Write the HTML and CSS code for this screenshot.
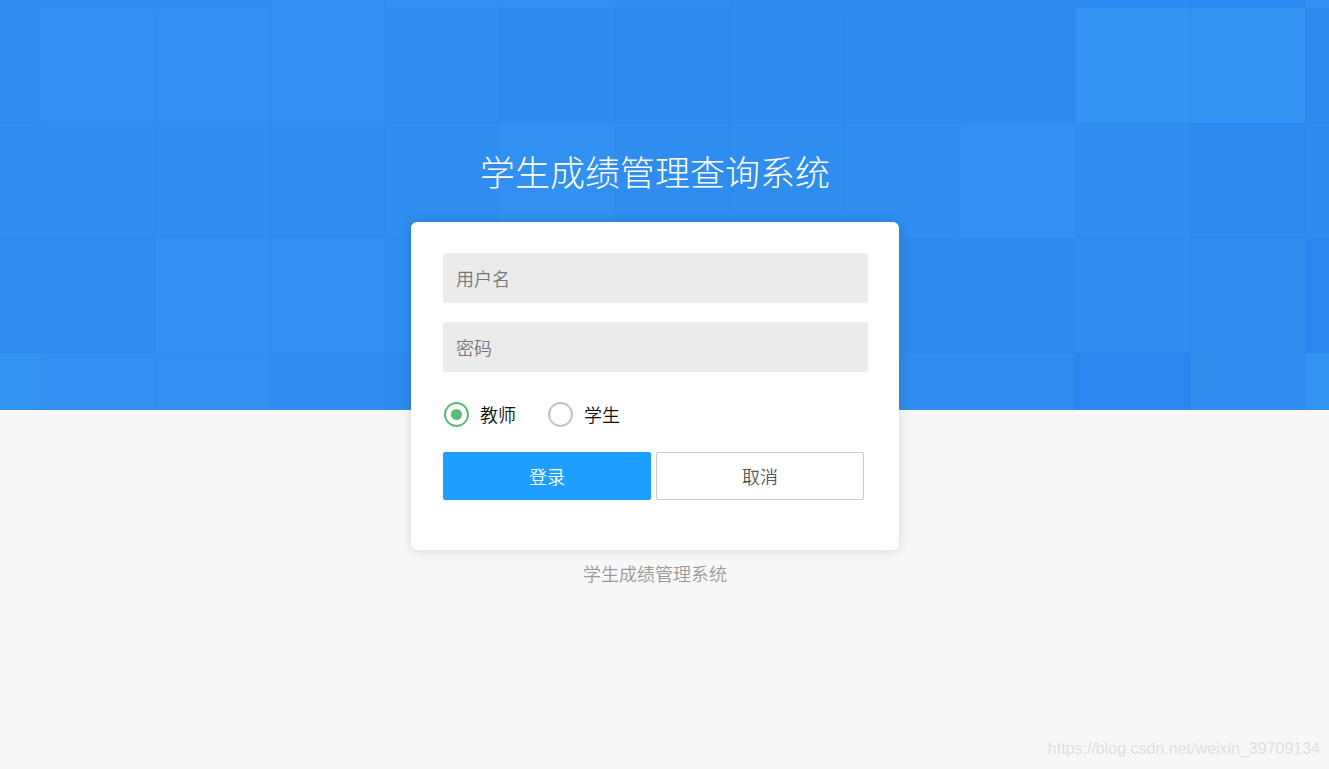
FILE: index.html
```html
<!DOCTYPE html>
<html lang="zh-CN">
<head>
<meta charset="utf-8">
<title>学生成绩管理查询系统</title>
<link rel="stylesheet" href="styles.css">
</head>
<body>
<div class="page">
  <div class="hero-bg" aria-hidden="true">
    <div class="tiles">
      <i class="s3"></i><i class="s3"></i><i class="s3"></i><i class="s4"></i><i class="s4"></i><i class="s4"></i><i class="s3"></i><i class="s2"></i><i class="s2"></i><i class="s2"></i><i class="s2"></i><i class="s2"></i><i class="s4"></i>
      <i class="s3"></i><i class="s4"></i><i class="s4"></i><i class="s4"></i><i class="s3"></i><i class="s2"></i><i class="s2"></i><i class="s2"></i><i class="s2"></i><i class="s2"></i><i class="s5"></i><i class="s5"></i><i class="s2"></i>
      <i class="s3"></i><i class="s3"></i><i class="s3"></i><i class="s3"></i><i class="s3"></i><i class="s4"></i><i class="s3"></i><i class="s3"></i><i class="s3"></i><i class="s4"></i><i class="s3"></i><i class="s2"></i><i class="s2"></i>
      <i class="s3"></i><i class="s3"></i><i class="s4"></i><i class="s4"></i><i class="s3"></i><i class="s3"></i><i class="s3"></i><i class="s3"></i><i class="s2"></i><i class="s2"></i><i class="s3"></i><i class="s3"></i><i class="s1"></i>
      <i class="s5"></i><i class="s4"></i><i class="s4"></i><i class="s3"></i><i class="s2"></i><i class="s3"></i><i class="s3"></i><i class="s3"></i><i class="s3"></i><i class="s3"></i><i class="s1"></i><i class="s3"></i><i class="s5"></i>
    </div>
  </div>

  <main class="login">
    <h1 class="title">学生成绩管理查询系统</h1>
    <form class="card">
      <input class="field" type="text" placeholder="用户名">
      <input class="field field-pass" type="password" placeholder="密码">
      <div class="roles">
        <label class="radio">
          <input type="radio" name="role" value="teacher" checked>
          <span class="circle"></span>
          <span class="radio-text">教师</span>
        </label>
        <label class="radio">
          <input type="radio" name="role" value="student">
          <span class="circle"></span>
          <span class="radio-text">学生</span>
        </label>
      </div>
      <div class="actions">
        <button type="button" class="btn btn-primary">登录</button>
        <button type="button" class="btn btn-plain">取消</button>
      </div>
    </form>
    <p class="footer">学生成绩管理系统</p>
  </main>

  <div class="watermark">https://blog.csdn.net/weixin_39709134</div>
</div>
</body>
</html>
```

FILE: styles.css
```css
* {
  box-sizing: border-box;
}

html, body {
  margin: 0;
  padding: 0;
}

body {
  background: #f8f8f8;
  font-family: "Noto Sans CJK SC", "Microsoft YaHei", sans-serif;
  font-weight: 350;
  color: #333;
}

.page {
  position: relative;
  width: 100%;
  height: 100vh;
  min-height: 769px;
  overflow: hidden;
}

/* Tiled blue backdrop */
.hero-bg {
  position: absolute;
  top: 0;
  left: 0;
  width: 100%;
  height: 410px;
  overflow: hidden;
  background: #2f8def;
  z-index: 0;
}

.tiles {
  display: grid;
  grid-template-columns: repeat(13, 115px);
  grid-template-rows: repeat(5, 115px);
  margin-left: -75px;
  margin-top: -107px;
}

.tiles i {
  display: block;
  box-shadow: inset 0 0 0 0.5px rgba(40, 120, 230, 0.1);
}

.s1 { background: #2b87ed; }
.s2 { background: #2d8aee; }
.s3 { background: #2f8def; }
.s4 { background: #3190f0; }
.s5 { background: #3395f1; }

/* Main column */
.login {
  position: relative;
  z-index: 1;
  width: 1310px;
  display: flex;
  flex-direction: column;
  align-items: center;
  padding-top: 149px;
}

.title {
  margin: 0 0 29px;
  font-size: 35px;
  line-height: 44px;
  font-weight: 300;
  color: #fff;
  letter-spacing: 0;
}

.card {
  width: 488px;
  padding: 31px 31px 50px 32px;
  background: #fff;
  border-radius: 6px;
  box-shadow: 0 1px 12px rgba(0, 0, 0, 0.14);
  display: flex;
  flex-direction: column;
  margin: 0;
}

.field {
  display: block;
  width: 425px;
  height: 50px;
  border: none;
  outline: none;
  border-radius: 3px;
  background: #ebebeb;
  padding: 0 13px;
  font-family: "Noto Sans CJK SC", "Microsoft YaHei", sans-serif;
  font-weight: 350;
  font-size: 18px;
  color: #333;
}

.field::placeholder {
  color: #777;
}

.field-pass {
  margin-top: 19px;
}

.roles {
  display: flex;
  align-items: center;
  height: 25px;
  margin-top: 30px;
  padding-left: 1px;
}

.radio {
  display: flex;
  align-items: center;
  margin-right: 32px;
  cursor: pointer;
}

.radio input {
  display: none;
}

.circle {
  position: relative;
  width: 25px;
  height: 25px;
  border: 2px solid #c2c2c2;
  border-radius: 50%;
  margin-right: 11px;
  flex: none;
}

.radio input:checked + .circle {
  border-color: #5fb878;
}

.radio input:checked + .circle::after {
  content: "";
  position: absolute;
  left: 5px;
  top: 5px;
  width: 11px;
  height: 11px;
  border-radius: 50%;
  background: #5fb878;
}

.radio-text {
  font-size: 18px;
  line-height: 25px;
  color: #111;
}

.actions {
  display: flex;
  gap: 5px;
  margin-top: 25px;
}

.btn {
  width: 208px;
  height: 48px;
  border-radius: 2px;
  font-family: "Noto Sans CJK SC", "Microsoft YaHei", sans-serif;
  font-weight: 350;
  font-size: 18px;
  cursor: pointer;
  padding: 0;
}

.btn-primary {
  background: #1e9fff;
  border: 1px solid #1e9fff;
  color: #fff;
}

.btn-plain {
  background: #fff;
  border: 1px solid #c9c9c9;
  color: #555;
}

.footer {
  margin: 11px 0 0;
  font-size: 18px;
  line-height: 24px;
  color: #999;
}

.watermark {
  position: absolute;
  right: 9px;
  bottom: 11px;
  font-family: "Liberation Sans", Arial, sans-serif;
  font-weight: normal;
  font-size: 16px;
  line-height: 18px;
  color: #dedede;
  z-index: 2;
}
```
